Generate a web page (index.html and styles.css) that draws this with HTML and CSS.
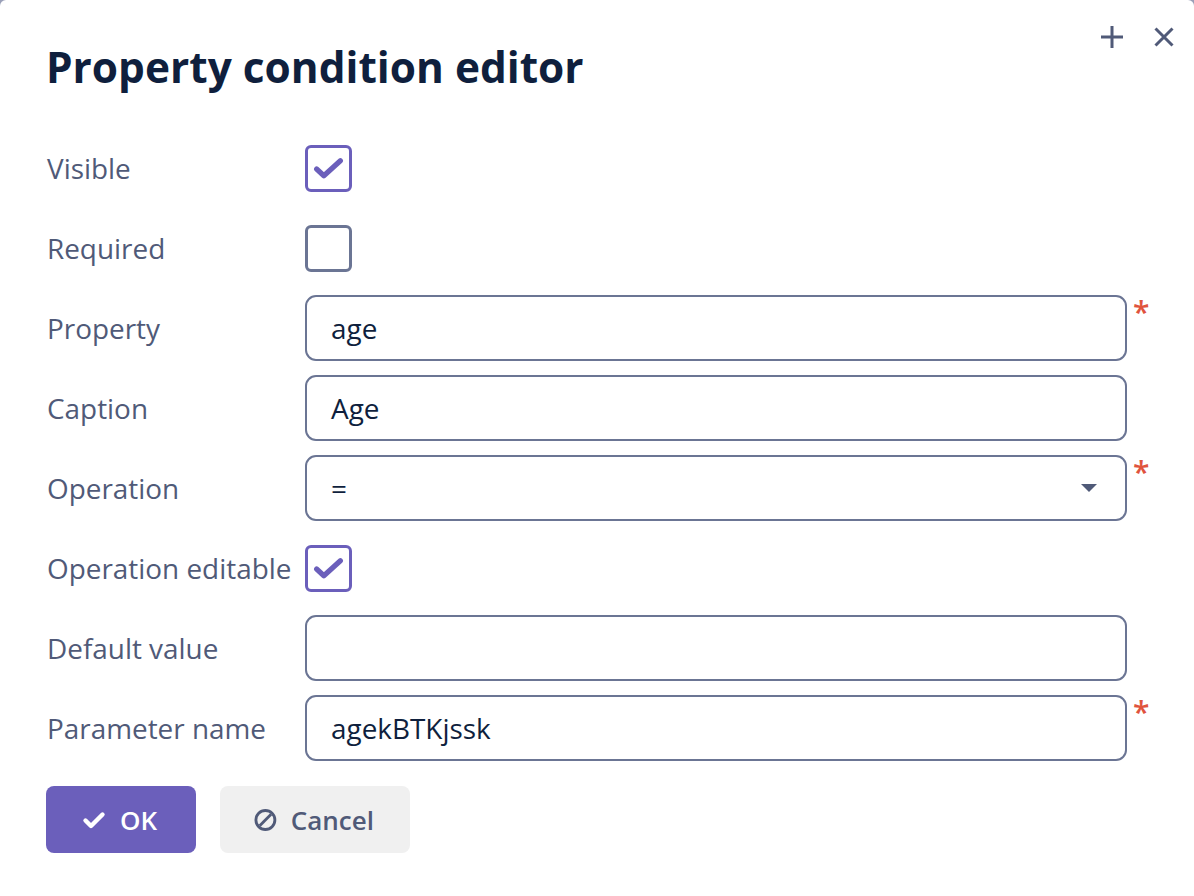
FILE: index.html
```html
<!DOCTYPE html>
<html>
<head>
<meta charset="utf-8">
<link rel="stylesheet" href="styles.css">
</head>
<body>
<div class="dialog">
  <div class="header">
    <h1 class="title">Property condition editor</h1>
    <div class="tools">
      <svg class="tool" viewBox="0 0 24 24" width="24" height="24"><path d="M12 1v22M1 12h22" stroke="#505a78" stroke-width="3" fill="none"/></svg>
      <svg class="tool" viewBox="0 0 24 24" width="24" height="24"><path d="M3.5 3.5l17 17M20.5 3.5l-17 17" stroke="#505a78" stroke-width="3" fill="none"/></svg>
    </div>
  </div>
  <div class="form">
    <div class="label">Visible</div>
    <div class="field"><span class="check on"><svg viewBox="0 0 30 24" width="31" height="25"><path d="M3.5 12.5l7 6.5L26.5 4.5" stroke="#6b5fbb" stroke-width="5" stroke-linecap="round" stroke-linejoin="round" fill="none"/></svg></span></div>
    <div class="req"></div>

    <div class="label">Required</div>
    <div class="field"><span class="check"></span></div>
    <div class="req"></div>

    <div class="label">Property</div>
    <div class="field"><div class="input">age</div></div>
    <div class="req">*</div>

    <div class="label">Caption</div>
    <div class="field"><div class="input">Age</div></div>
    <div class="req"></div>

    <div class="label">Operation</div>
    <div class="field"><div class="input select"><span>=</span><svg viewBox="0 0 16 8" width="16" height="8"><path d="M0 0h16L8 8z" fill="#505a78"/></svg></div></div>
    <div class="req">*</div>

    <div class="label">Operation editable</div>
    <div class="field"><span class="check on"><svg viewBox="0 0 30 24" width="31" height="25"><path d="M3.5 12.5l7 6.5L26.5 4.5" stroke="#6b5fbb" stroke-width="5" stroke-linecap="round" stroke-linejoin="round" fill="none"/></svg></span></div>
    <div class="req"></div>

    <div class="label">Default value</div>
    <div class="field"><div class="input"></div></div>
    <div class="req"></div>

    <div class="label">Parameter name</div>
    <div class="field"><div class="input">agekBTKjssk</div></div>
    <div class="req">*</div>
  </div>
  <div class="buttons">
    <button class="btn primary"><svg viewBox="0 0 24 24" width="24" height="24"><path d="M3.5 12.5l5.5 5.5L20.5 6.5" stroke="#fff" stroke-width="4.4" stroke-linecap="round" stroke-linejoin="round" fill="none"/></svg>OK</button>
    <button class="btn secondary"><svg viewBox="0 0 24 24" width="24" height="24"><circle cx="12" cy="12" r="10" stroke="#505a78" stroke-width="3" fill="none"/><path d="M6 18L18 6" stroke="#505a78" stroke-width="3"/></svg>Cancel</button>
  </div>
</div>
</body>
</html>
```
FILE: styles.css
```css
* { box-sizing: border-box; }
html, body { margin: 0; padding: 0; }
body {
  background: #9aa0b8;
  font-family: "Open Sans", "Noto Sans", sans-serif;
  width: 1194px;
  height: 896px;
  overflow: hidden;
}
.dialog {
  background: #fff;
  width: 1194px;
  height: 896px;
  border-radius: 6px 6px 0 0;
  padding: 0 0 0 46px;
}
.header {
  display: flex;
  justify-content: space-between;
  align-items: flex-start;
}
.title {
  margin: 38px 0 0 0;
  font-size: 42.4px;
  line-height: 58px;
  font-weight: 700;
  color: #0f1f3d;
  letter-spacing: 0;
}
.tools {
  display: flex;
  gap: 28px;
  padding: 25px 18px 0 0;
}
.form {
  margin-top: 39px;
  display: grid;
  grid-template-columns: 259px 822px 24px;
  grid-auto-rows: 66px;
  row-gap: 14px;
  align-items: center;
}
.label {
  font-size: 27.9px;
  color: #505a78;
  padding-left: 1px;
}
.field { display: flex; align-items: center; height: 66px; }
.check {
  width: 47px;
  height: 47px;
  border: 3px solid #6b7594;
  border-radius: 6px;
  display: flex;
  align-items: center;
  justify-content: center;
}
.check.on { border-color: #6b5fbb; }
.input {
  width: 100%;
  height: 66px;
  border: 2px solid #6b7594;
  border-radius: 11px;
  padding: 0 24px;
  font-size: 27.9px;
  color: #0f1f3d;
  display: flex;
  align-items: center;
}
.select { justify-content: space-between; padding-right: 28px; }
.req {
  align-self: start;
  color: #e0533d;
  font-size: 30px;
  line-height: 30px;
  padding: 2px 0 0 6px;
  font-weight: 600;
}
.buttons {
  margin-top: 25px;
  display: flex;
  gap: 24px;
}
.btn {
  height: 67px;
  border: none;
  border-radius: 8px;
  font-family: "Open Sans", "Noto Sans", sans-serif;
  font-size: 26px;
  font-weight: 600;
  display: flex;
  align-items: center;
  gap: 14px;
  padding: 0 36px;
}
.secondary { padding-left: 34px; }
.primary { background: #6b5fbb; color: #fff; width: 150px; }
.secondary { background: #f0f0f0; color: #505a78; width: 190px; }
```
